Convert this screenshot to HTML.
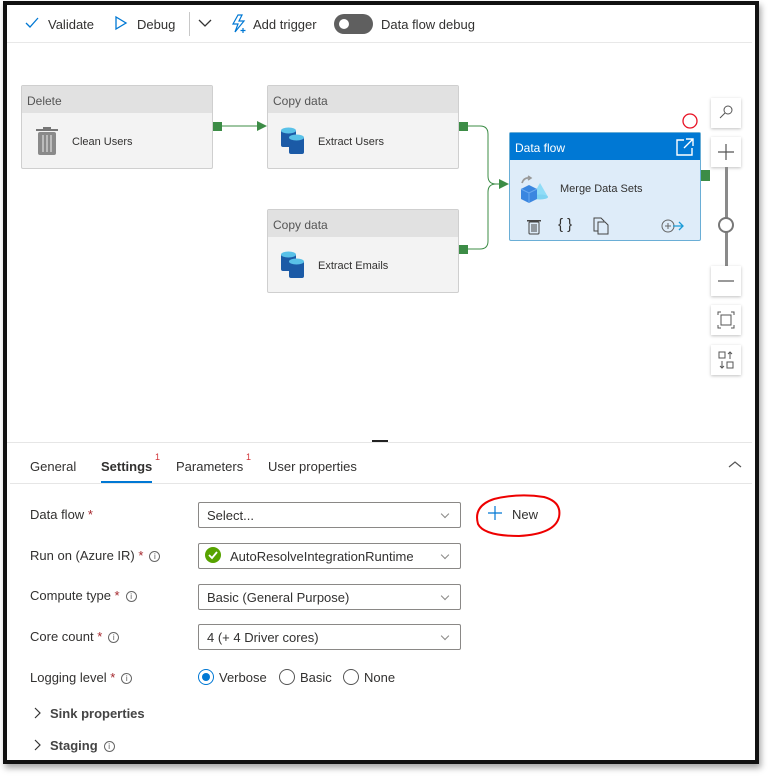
<!DOCTYPE html>
<html><head><meta charset="utf-8"><style>
*{box-sizing:border-box;margin:0;padding:0}
body{width:768px;height:776px;background:#fff;position:relative;overflow:hidden;font-family:"Liberation Sans",sans-serif;color:#323130}
.frame{position:absolute;left:3px;top:1px;width:756px;height:763px;border:4px solid #111;box-shadow:2px 4px 6px rgba(0,0,0,.35);background:#fff}
.a{position:absolute}
.t{font-size:13px;white-space:nowrap}
.node{position:absolute;background:#f3f3f3;border:1px solid #cfcfcf;border-radius:2px}
.node .h{height:27px;background:#e1e1e1;font-size:12px;color:#555;padding:8px 5px 0}
.node .b{font-size:11px;padding-left:50px;padding-top:23px}
.sq{position:absolute;width:9px;height:9px;background:#3c8c46}
.zb{position:absolute;left:711px;width:30px;height:30px;background:#fff;box-shadow:0 1px 3px rgba(0,0,0,.25)}
.dd{position:absolute;left:198px;width:263px;height:26px;border:1px solid #8a8886;border-radius:2px;font-size:13px;padding:5px 8px}
.dd:after{content:"";position:absolute;right:12px;top:8px;width:5px;height:5px;border-right:1px solid #8a8886;border-bottom:1px solid #8a8886;transform:rotate(45deg)}
.lb{position:absolute;left:30px;font-size:13px}
.st{color:#a4262c}
.inf{display:inline-block;width:11px;height:11px;border:1px solid #666;border-radius:50%;font-size:8px;text-align:center;line-height:9px;margin-left:6px;vertical-align:1px;color:#555}
.rad{position:absolute;width:16px;height:16px;border:1px solid #555;border-radius:50%}
</style></head><body>
<div class="frame"></div>
<svg class="a" style="left:25px;top:17px" width="14" height="12"><path d="M1 6l4 4 8-9" stroke="#0078d4" fill="none" stroke-width="1.3"/></svg>
<div class="a t" style="left:48px;top:17px">Validate</div>
<svg class="a" style="left:114px;top:15px" width="14" height="16"><path d="M2 2v12l10-6z" stroke="#0078d4" fill="none" stroke-width="1.3"/></svg>
<div class="a t" style="left:137px;top:17px">Debug</div>
<div class="a" style="left:189px;top:12px;width:1px;height:24px;background:#c8c8c8"></div>
<svg class="a" style="left:198px;top:18px" width="14" height="10"><path d="M1 2l6 6 6-6" stroke="#333" fill="none" stroke-width="1.3"/></svg>
<svg class="a" style="left:230px;top:14px" width="18" height="20"><path d="M8 1L3 10h5l-3 8 9-11H9l3-6z" stroke="#0078d4" fill="none" stroke-width="1.2"/><path d="M13 14v5M10.5 16.5h5" stroke="#0078d4" stroke-width="1.2"/></svg>
<div class="a t" style="left:253px;top:17px">Add trigger</div>
<div class="a" style="left:334px;top:14px;width:39px;height:20px;border-radius:10px;background:#5f5f5f"></div>
<div class="a" style="left:339px;top:19px;width:10px;height:10px;border-radius:50%;background:#fff"></div>
<div class="a t" style="left:381px;top:17px">Data flow debug</div>
<div class="a" style="left:7px;top:42px;width:745px;height:1px;background:#e8e8e8"></div>
<div class="node" style="left:21px;top:85px;width:192px;height:84px"><div class="h">Delete</div><div class="b">Clean Users</div></div>
<svg class="a" style="left:35px;top:126px" width="24" height="30"><rect x="1" y="3" width="22" height="2" fill="#777"/><rect x="8" y="1" width="8" height="3" fill="#777"/><rect x="3" y="6" width="18" height="23" rx="2" fill="#8a8a8a"/><path d="M8 9v17M12 9v17M16 9v17" stroke="#ddd" stroke-width="1.2"/></svg>
<div class="node" style="left:267px;top:85px;width:192px;height:84px"><div class="h">Copy data</div><div class="b">Extract Users</div></div>
<div class="node" style="left:267px;top:209px;width:192px;height:84px"><div class="h">Copy data</div><div class="b">Extract Emails</div></div>
<svg class="a" style="left:280px;top:127px" width="26" height="30"><rect x="1" y="3" width="15" height="17" rx="2" fill="#1b5aa6"/><ellipse cx="8.5" cy="3.5" rx="7.5" ry="3" fill="#59c1e8"/><rect x="9" y="10" width="15" height="17" rx="2" fill="#1b5aa6"/><ellipse cx="16.5" cy="10.5" rx="7.5" ry="3" fill="#59c1e8"/></svg>
<svg class="a" style="left:280px;top:251px" width="26" height="30"><rect x="1" y="3" width="15" height="17" rx="2" fill="#1b5aa6"/><ellipse cx="8.5" cy="3.5" rx="7.5" ry="3" fill="#59c1e8"/><rect x="9" y="10" width="15" height="17" rx="2" fill="#1b5aa6"/><ellipse cx="16.5" cy="10.5" rx="7.5" ry="3" fill="#59c1e8"/></svg>
<div class="a" style="left:509px;top:132px;width:192px;height:109px;background:#deecf9;border:1px solid #6aaed6;border-radius:2px">
<div style="height:27px;background:#0078d4;color:#fff;font-size:12px;padding:8px 5px 0">Data flow</div>
<div class="t" style="position:absolute;left:50px;top:50px;font-size:11px">Merge Data Sets</div></div>
<svg class="a" style="left:675px;top:137px" width="20" height="20"><path d="M9 3H2v15h15v-7M11 2h7v7M18 2L9 11" stroke="#fff" fill="none" stroke-width="1.4"/></svg>
<svg class="a" style="left:518px;top:171px" width="44" height="36"><path d="M22 12l8 14h-16z" fill="#8fdcf7"/><ellipse cx="22" cy="26" rx="8" ry="2.5" fill="#7fd3f2"/><path d="M3 18l8-4 8 4v10l-8 4-8-4z" fill="#3a86e0"/><path d="M3 18l8 4 8-4M11 22v10" stroke="#6aa9ef" fill="none"/><path d="M4 12q2-6 8-5" stroke="#999" fill="none" stroke-width="1.8"/><path d="M10 5l3 2-3 2" stroke="#999" fill="none" stroke-width="1.5"/></svg>
<svg class="a" style="left:526px;top:217px" width="16" height="18"><rect x="1" y="3" width="14" height="1.5" fill="#444"/><rect x="3" y="5" width="10" height="12" rx="1" stroke="#444" fill="none"/><path d="M6 7v8M8 7v8M10 7v8" stroke="#444"/></svg>
<div class="a t" style="left:558px;top:216px;font-size:15px">{ }</div>
<svg class="a" style="left:593px;top:217px" width="16" height="18"><path d="M1 1h7l3 3v10H1z" stroke="#444" fill="none"/><path d="M5 5h7l3 3v9H5z" stroke="#444" fill="#deecf9"/></svg>
<svg class="a" style="left:661px;top:219px" width="24" height="14"><circle cx="7" cy="7" r="6" stroke="#666" fill="none"/><path d="M7 4v6M4 7h6" stroke="#666"/><path d="M12 7h10M18 3l4 4-4 4" stroke="#1a9bd7" fill="none" stroke-width="1.3"/></svg>
<div class="sq" style="left:213px;top:122px"></div>
<svg class="a" style="left:220px;top:118px" width="50" height="16"><path d="M0 8h40" stroke="#3c8c46"/><path d="M37 3l10 5-10 5z" fill="#3c8c46"/></svg>
<div class="sq" style="left:459px;top:122px"></div>
<div class="sq" style="left:459px;top:245px"></div>
<svg class="a" style="left:466px;top:120px" width="50" height="140"><path d="M0 6h14q8 0 8 8v42q0 8 8 8h10M0 129h14q8 0 8-8V72q0-8 8-8" stroke="#3c8c46" fill="none"/><path d="M33 59l10 5-10 5z" fill="#3c8c46"/></svg>
<div class="sq" style="left:701px;top:170px;height:11px"></div>
<svg class="a" style="left:681px;top:112px" width="18" height="18"><circle cx="9" cy="9" r="7" stroke="#e81123" fill="none" stroke-width="1.3"/></svg>
<div class="zb" style="top:98px"><svg width="30" height="30"><circle cx="17" cy="12" r="4" stroke="#555" fill="none"/><path d="M14 15l-5 5" stroke="#555"/></svg></div>
<div class="zb" style="top:137px"><svg width="30" height="30"><path d="M15 7v16M7 15h16" stroke="#555" stroke-width="1.2"/></svg></div>
<div class="a" style="left:725px;top:167px;width:3px;height:99px;background:#8a8a8a"></div>
<div class="a" style="left:718px;top:217px;width:16px;height:16px;border-radius:50%;border:2px solid #777;background:#fff"></div>
<div class="zb" style="top:266px"><svg width="30" height="30"><path d="M7 15h16" stroke="#555" stroke-width="1.2"/></svg></div>
<div class="zb" style="top:305px"><svg width="30" height="30"><rect x="10" y="10" width="10" height="10" stroke="#555" fill="none"/><path d="M7 10V7h3M20 7h3v3M23 20v3h-3M10 23H7v-3" stroke="#555" fill="none"/></svg></div>
<div class="zb" style="top:345px"><svg width="30" height="30"><rect x="8" y="7" width="6" height="6" stroke="#555" fill="none"/><rect x="16" y="17" width="6" height="6" stroke="#555" fill="none"/><path d="M19 14V7M17 9l2-2 2 2M11 16v7M9 21l2 2 2-2" stroke="#555" fill="none"/></svg></div>
<div class="a" style="left:7px;top:442px;width:745px;height:1px;background:#e6e6e6"></div>
<div class="a" style="left:372px;top:440px;width:16px;height:2px;background:#222"></div>
<div class="a t" style="left:30px;top:459px">General</div>
<div class="a t" style="left:101px;top:459px;font-weight:bold">Settings</div>
<div class="a" style="left:155px;top:452px;font-size:9px;color:#d13438">1</div>
<div class="a" style="left:101px;top:481px;width:51px;height:2px;background:#0078d4"></div>
<div class="a t" style="left:176px;top:459px">Parameters</div>
<div class="a" style="left:246px;top:452px;font-size:9px;color:#d13438">1</div>
<div class="a t" style="left:268px;top:459px">User properties</div>
<svg class="a" style="left:728px;top:460px" width="14" height="9"><path d="M1 7l6-5 6 5" stroke="#555" fill="none" stroke-width="1.2"/></svg>
<div class="a" style="left:10px;top:483px;width:742px;height:1px;background:#e6e6e6"></div>
<div class="lb" style="top:507px">Data flow <span class="st">*</span></div>
<div class="dd" style="top:502px">Select...</div>
<svg class="a" style="left:487px;top:505px" width="16" height="16"><path d="M8 1v14M1 8h14" stroke="#0078d4" stroke-width="1.2"/></svg>
<div class="a t" style="left:512px;top:507px">New</div>
<svg class="a" style="left:474px;top:494px" width="88" height="44"><path d="M20 5q25-6 50-2 18 5 15 20-4 17-40 19-35 0-41-12-5-18 16-25" stroke="#e00" fill="none" stroke-width="2"/></svg>
<div class="lb" style="top:548px">Run on (Azure IR) <span class="st">*</span><span class="inf">i</span></div>
<div class="dd" style="top:543px;padding-left:31px">AutoResolveIntegrationRuntime</div>
<svg class="a" style="left:205px;top:547px" width="16" height="16"><circle cx="8" cy="8" r="8" fill="#57a300"/><path d="M4 8l3 3 5-6" stroke="#fff" fill="none" stroke-width="1.8"/></svg>
<div class="lb" style="top:588px">Compute type <span class="st">*</span><span class="inf">i</span></div>
<div class="dd" style="top:584px">Basic (General Purpose)</div>
<div class="lb" style="top:629px">Core count <span class="st">*</span><span class="inf">i</span></div>
<div class="dd" style="top:624px">4 (+ 4 Driver cores)</div>
<div class="lb" style="top:670px">Logging level <span class="st">*</span><span class="inf">i</span></div>
<div class="rad" style="left:198px;top:669px;border-color:#0078d4"><div style="position:absolute;left:3px;top:3px;width:8px;height:8px;border-radius:50%;background:#0078d4"></div></div>
<div class="a t" style="left:219px;top:670px">Verbose</div>
<div class="rad" style="left:279px;top:669px"></div>
<div class="a t" style="left:300px;top:670px">Basic</div>
<div class="rad" style="left:343px;top:669px"></div>
<div class="a t" style="left:364px;top:670px">None</div>
<svg class="a" style="left:33px;top:706px" width="8" height="14"><path d="M2 2l5 5-5 5" stroke="#333" fill="none" stroke-width="1.2"/></svg>
<div class="lb" style="left:50px;top:706px;font-weight:bold;color:#444">Sink properties</div>
<svg class="a" style="left:33px;top:738px" width="8" height="14"><path d="M2 2l5 5-5 5" stroke="#333" fill="none" stroke-width="1.2"/></svg>
<div class="lb" style="left:50px;top:738px;font-weight:bold;color:#444">Staging<span class="inf" style="font-weight:normal">i</span></div>
</body></html>
